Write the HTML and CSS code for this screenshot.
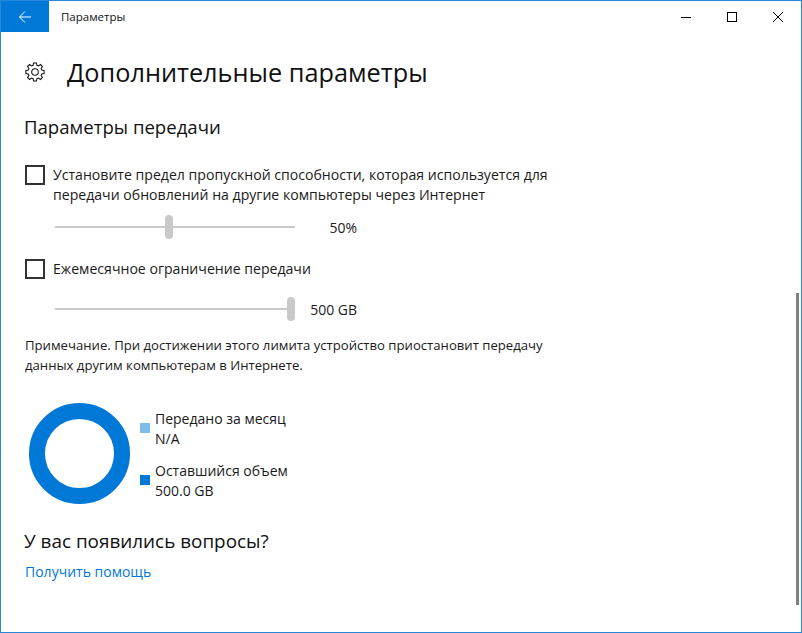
FILE: index.html
```html
<!DOCTYPE html>
<html lang="ru">
<head>
<meta charset="utf-8">
<title>Параметры</title>
<link rel="stylesheet" href="styles.css">
</head>
<body>
<div class="win">
  <header class="titlebar">
    <div class="back"><svg width="12" height="12" viewBox="0 0 12 12" fill="none" stroke="#fff" stroke-width="1"><path d="M.5 6H12M6 .5L.5 6L6 11.5"/></svg></div>
    <div class="app-name">Параметры</div>
    <div class="controls">
      <div class="ctl"><svg width="10" height="10" viewBox="0 0 10 10"><path d="M0 5.5H10" stroke="#000"/></svg></div>
      <div class="ctl"><svg width="10" height="10" viewBox="0 0 10 10"><rect x=".5" y=".5" width="9" height="9" fill="none" stroke="#000"/></svg></div>
      <div class="ctl"><svg width="10" height="10" viewBox="0 0 10 10"><path d="M0 0L10 10M10 0L0 10" stroke="#000"/></svg></div>
    </div>
  </header>
  <main class="content">
    <div class="page-head">
      <svg class="gear" width="20" height="20" viewBox="0 0 22 22" fill="none" stroke="#111" stroke-width="1.15"><path d="M9.4 1h3.2l.5 2.6 1.7.7 2.2-1.5 2.2 2.2-1.5 2.2.7 1.7 2.6.5v3.2l-2.6.5-.7 1.7 1.5 2.2-2.2 2.2-2.2-1.5-1.7.7-.5 2.6H9.4l-.5-2.6-1.7-.7L5 19.2 2.8 17l1.5-2.2-.7-1.7L1 12.6V9.4l2.6-.5.7-1.7-1.5-2.2L5 2.8l2.2 1.5 1.7-.7z"/><circle cx="11" cy="11" r="3.6"/></svg>
      <h1 class="title">Дополнительные параметры</h1>
    </div>
    <h2 class="section transfer">Параметры передачи</h2>
    <label class="check first"><span class="box"></span><span class="check-text">Установите предел пропускной способности, которая используется для<br>передачи обновлений на другие компьютеры через Интернет</span></label>
    <div class="slider-row">
      <div class="slider"><span class="thumb mid"></span></div>
      <span class="value">50%</span>
    </div>
    <label class="check second"><span class="box"></span><span class="check-text">Ежемесячное ограничение передачи</span></label>
    <div class="slider-row lower">
      <div class="slider"><span class="thumb end"></span></div>
      <span class="value">500 GB</span>
    </div>
    <p class="note">Примечание. При достижении этого лимита устройство приостановит передачу<br>данных другим компьютерам в Интернете.</p>
    <div class="usage">
      <div class="donut"></div>
      <div class="legend">
        <div class="legend-item"><span class="swatch light"></span><div>Передано за месяц<br>N/A</div></div>
        <div class="legend-item"><span class="swatch dark"></span><div>Оставшийся объем<br>500.0 GB</div></div>
      </div>
    </div>
    <h2 class="section help">У вас появились вопросы?</h2>
    <a class="link" href="#">Получить помощь</a>
  </main>
  <div class="scrollbar"></div>
</div>
</body>
</html>
```

FILE: styles.css
```css
* { box-sizing: border-box; }
html, body { margin: 0; padding: 0; }
body { font-family: "Open Sans", "Noto Sans", sans-serif; color: #1a1a1a; background: #fff; }
.win { position: relative; width: 802px; height: 633px; border: 1px solid #2a86d8; overflow: hidden; background: #fff; }
.titlebar { display: flex; align-items: center; height: 31px; }
.back { width: 48px; height: 31px; background: #0078d7; display: flex; align-items: center; justify-content: center; }
.app-name { margin-left: 12px; font-size: 11.5px; color: #111; flex: 1; }
.controls { display: flex; }
.ctl { width: 46px; height: 31px; display: flex; align-items: center; justify-content: center; }
.content { padding: 0 0 0 23px; }
.page-head { display: flex; align-items: center; height: 52px; margin-top: 14px; }
.gear { margin-left: 1px; margin-top: -1px; flex: none; }
.title { margin: 0 0 0 22px; font-size: 25.3px; font-weight: 400; color: #111; line-height: 36px; }
.section { margin: 0; font-size: 18.6px; font-weight: 400; color: #111; line-height: 24px; }
.transfer { margin-top: 17px; }
.check { display: flex; align-items: flex-start; font-size: 14.1px; line-height: 20px; color: #1a1a1a; }
.first { margin-top: 26px; }
.second { margin-top: 20px; }
.box { width: 20px; height: 20px; border: 2px solid #333; margin: 0 8px 0 1px; flex: none; }
.slider-row { display: flex; align-items: center; height: 24px; margin-top: 10px; padding-left: 31px; }
.lower { margin-top: 18px; }
.slider { position: relative; width: 240px; height: 2px; background: #c9c9c9; }
.thumb { position: absolute; top: -11px; width: 8px; height: 24px; border-radius: 4px; background: #c9c9c9; }
.mid { left: 110px; }
.end { right: 0; }
.value { width: 62px; text-align: right; font-size: 14px; color: #1a1a1a; }
.note { margin: 14px 0 0 1px; font-size: 13.15px; line-height: 20px; color: #1a1a1a; }
.usage { display: flex; align-items: center; margin-top: 28px; }
.donut { width: 101px; height: 101px; margin-left: 5px; border: 16px solid #0078d7; border-radius: 50%; flex: none; }
.legend { margin: 2px 0 0 10px; display: flex; flex-direction: column; gap: 12px; }
.legend-item { display: flex; align-items: center; gap: 5px; font-size: 14px; line-height: 20px; }
.swatch { width: 10px; height: 10px; margin-top: -2px; flex: none; }
.light { background: #7ebcec; }
.dark { background: #0078d7; }
.help { margin-top: 25px; font-size: 18.9px; }
.link { display: block; margin: 9px 0 0 1px; font-size: 14px; color: #0078d7; text-decoration: none; }
.scrollbar { position: absolute; top: 292px; right: 2px; width: 3px; height: 312px; background: #808080; }
```
